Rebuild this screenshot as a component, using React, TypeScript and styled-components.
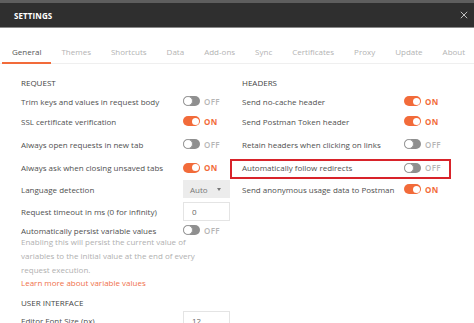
import React from 'react'
import styled, { createGlobalStyle } from 'styled-components'

const GlobalStyle = createGlobalStyle`
  html, body {
    margin: 0;
    padding: 0;
    background: #ffffff;
    overflow: hidden;
  }
  body {
    font-family: 'Open Sans', 'Liberation Sans', sans-serif;
  }
`

const Window = styled.div`
  width: 474px;
  height: 323px;
  display: flex;
  flex-direction: column;
  background: #ffffff;
  overflow: hidden;

  & > * {
    flex-shrink: 0;
  }
`

const TitleBar = styled.div`
  height: 24px;
  border-top: 3px solid #5e5e5e;
  border-bottom: 1px solid #8a8a8a;
  background: #2f2f2f;
  display: flex;
  align-items: center;
  justify-content: space-between;
  padding: 0 6px 0 14px;
`

const Title = styled.span`
  color: #ffffff;
  font-size: 8px;
  font-weight: 700;
  letter-spacing: 0.1px;
`

const CloseIcon = styled.svg`
  width: 8px;
  height: 8px;
`

const TabBar = styled.div`
  display: flex;
  margin-top: 17px;
  padding-left: 2px;
  border-bottom: 1px solid #efefef;
`

const Tab = styled.div<{ $active?: boolean }>`
  flex-shrink: 0;
  white-space: nowrap;
  padding: 0 10px 4px;
  font-size: 8px;
  line-height: 13px;
  color: ${p => (p.$active ? '#555555' : '#b3b3b3')};
  border-bottom: 2px solid ${p => (p.$active ? '#f26b3a' : 'transparent')};
  margin-bottom: -1px;
`

const Columns = styled.div`
  display: grid;
  grid-template-columns: 221px 221px;
  padding: 12px 0 0 21px;
`

const Column = styled.div`
  display: flex;
  flex-direction: column;

  & > * {
    flex-shrink: 0;
  }
`

const Heading = styled.div<{ $gap?: number; $after?: number }>`
  font-size: 8px;
  line-height: 14px;
  color: #444444;
  text-transform: uppercase;
  margin-top: ${p => p.$gap ?? 0}px;
  margin-bottom: ${p => p.$after ?? 1}px;
`

const Row = styled.div<{ $h?: number; $marked?: boolean }>`
  position: relative;
  display: flex;
  align-items: center;
  height: ${p => p.$h ?? 22}px;

  ${p =>
    p.$marked &&
    `
    &::after {
      content: '';
      position: absolute;
      left: -12px;
      top: 2px;
      width: 221px;
      height: 20px;
      box-sizing: border-box;
      border: 2px solid #d8232a;
    }
  `}
`

const Label = styled.span`
  width: 162px;
  flex-shrink: 0;
  font-size: 8px;
  color: #4f4f4f;
  white-space: nowrap;
`

const Switch = styled.span<{ $on: boolean }>`
  position: relative;
  width: 17px;
  height: 10px;
  border-radius: 5px;
  background: ${p => (p.$on ? '#f26b3a' : '#8f8f8f')};
  flex-shrink: 0;

  &::before {
    content: '';
    position: absolute;
    top: ${p => (p.$on ? 1.5 : 0)}px;
    left: ${p => (p.$on ? 8.5 : 0)}px;
    width: ${p => (p.$on ? 7 : 8)}px;
    height: ${p => (p.$on ? 7 : 8)}px;
    border-radius: 50%;
    background: #ffffff;
    border: ${p => (p.$on ? 'none' : '1px solid #9a9a9a')};
  }
`

const SwitchText = styled.span<{ $on: boolean }>`
  margin-left: 4px;
  font-size: 8px;
  font-weight: ${p => (p.$on ? 700 : 600)};
  letter-spacing: 0.4px;
  color: ${p => (p.$on ? '#f26b3a' : '#b5b5b5')};
`

const Select = styled.div`
  width: 47px;
  height: 18px;
  box-sizing: border-box;
  background: #ececec;
  display: flex;
  align-items: center;
  justify-content: space-between;
  padding: 0 9px 0 7px;
  font-size: 8px;
  color: #777777;
`

const Caret = styled.span`
  width: 0;
  height: 0;
  border-left: 2.5px solid transparent;
  border-right: 2.5px solid transparent;
  border-top: 3px solid #777777;
`

const Input = styled.div`
  width: 47px;
  height: 19px;
  box-sizing: border-box;
  border: 1px solid #e4e4e4;
  display: flex;
  align-items: center;
  padding-left: 8px;
  font-size: 8px;
  color: #666666;
`

const Description = styled.div`
  margin-top: -3px;
  width: 200px;
  font-size: 8px;
  line-height: 14px;
  color: #b0b0b0;
`

const Link = styled.div`
  font-size: 8px;
  line-height: 12px;
  color: #f0714a;
`

type Toggle = { label: string; on: boolean; marked?: boolean; h?: number }

const ToggleRow = ({ label, on, marked, h }: Toggle) => (
  <Row $marked={marked} $h={h}>
    <Label>{label}</Label>
    <Switch $on={on} />
    <SwitchText $on={on}>{on ? 'ON' : 'OFF'}</SwitchText>
  </Row>
)

const tabs = ['General', 'Themes', 'Shortcuts', 'Data', 'Add-ons', 'Sync', 'Certificates', 'Proxy', 'Update', 'About']

const headers: Toggle[] = [
  { label: 'Send no-cache header', on: true, h: 20 },
  { label: 'Send Postman Token header', on: true, h: 20 },
  { label: 'Retain headers when clicking on links', on: false, h: 26 },
  { label: 'Automatically follow redirects', on: false, marked: true, h: 21 },
  { label: 'Send anonymous usage data to Postman', on: true },
]

export default function App() {
  return (
    <>
      <GlobalStyle />
      <Window>
        <TitleBar>
          <Title>SETTINGS</Title>
          <CloseIcon viewBox="0 0 10 10">
            <path d="M1 1 L9 9 M9 1 L1 9" stroke="#c8c8c8" strokeWidth="1.2" />
          </CloseIcon>
        </TitleBar>
        <TabBar>
          {tabs.map((t, i) => (
            <Tab key={t} $active={i === 0}>
              {t}
            </Tab>
          ))}
        </TabBar>
        <Columns>
          <Column>
            <Heading>Request</Heading>
            <ToggleRow label="Trim keys and values in request body" on={false} h={20} />
            <ToggleRow label="SSL certificate verification" on={true} h={20} />
            <ToggleRow label="Always open requests in new tab" on={false} h={26} />
            <ToggleRow label="Always ask when closing unsaved tabs" on={true} h={21} />
            <Row>
              <Label>Language detection</Label>
              <Select>
                Auto <Caret />
              </Select>
            </Row>
            <Row>
              <Label>Request timeout in ms (0 for infinity)</Label>
              <Input>0</Input>
            </Row>
            <ToggleRow label="Automatically persist variable values" on={false} h={16} />
            <Description>
              Enabling this will persist the current value of variables to the initial value at the end of
              every request execution.
            </Description>
            <Link>Learn more about variable values</Link>
            <Heading $gap={7} $after={-1}>User Interface</Heading>
            <Row>
              <Label>Editor Font Size (px)</Label>
              <Input>12</Input>
            </Row>
          </Column>
          <Column>
            <Heading>Headers</Heading>
            {headers.map(h => (
              <ToggleRow key={h.label} {...h} />
            ))}
          </Column>
        </Columns>
      </Window>
    </>
  )
}
